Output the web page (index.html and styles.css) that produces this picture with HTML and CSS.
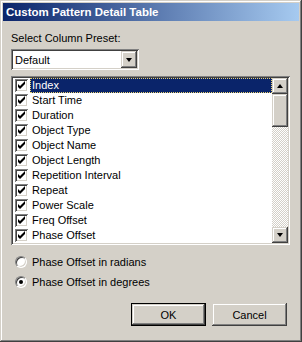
FILE: index.html
```html
<!DOCTYPE html>
<html>
<head>
<meta charset="utf-8">
<link rel="stylesheet" href="styles.css">
</head>
<body>
<div class="window">
  <div class="titlebar">Custom Pattern Detail Table</div>
  <div class="content">
    <div class="label">Select Column Preset:</div>
    <div class="combo">
      <span class="combo-text">Default</span>
      <span class="btn3d combo-btn"><span class="arrow-down"></span></span>
    </div>
    <div class="listbox">
      <div class="items">
        <div class="row sel"><span class="check"><svg width="9" height="9" viewBox="0 0 9 9"><path d="M1 3v3l2 2 5-5v-3l-5 5z" fill="#000"/></svg></span><span class="txt">Index</span></div>
        <div class="row"><span class="check"><svg width="9" height="9" viewBox="0 0 9 9"><path d="M1 3v3l2 2 5-5v-3l-5 5z" fill="#000"/></svg></span><span class="txt">Start Time</span></div>
        <div class="row"><span class="check"><svg width="9" height="9" viewBox="0 0 9 9"><path d="M1 3v3l2 2 5-5v-3l-5 5z" fill="#000"/></svg></span><span class="txt">Duration</span></div>
        <div class="row"><span class="check"><svg width="9" height="9" viewBox="0 0 9 9"><path d="M1 3v3l2 2 5-5v-3l-5 5z" fill="#000"/></svg></span><span class="txt">Object Type</span></div>
        <div class="row"><span class="check"><svg width="9" height="9" viewBox="0 0 9 9"><path d="M1 3v3l2 2 5-5v-3l-5 5z" fill="#000"/></svg></span><span class="txt">Object Name</span></div>
        <div class="row"><span class="check"><svg width="9" height="9" viewBox="0 0 9 9"><path d="M1 3v3l2 2 5-5v-3l-5 5z" fill="#000"/></svg></span><span class="txt">Object Length</span></div>
        <div class="row"><span class="check"><svg width="9" height="9" viewBox="0 0 9 9"><path d="M1 3v3l2 2 5-5v-3l-5 5z" fill="#000"/></svg></span><span class="txt">Repetition Interval</span></div>
        <div class="row"><span class="check"><svg width="9" height="9" viewBox="0 0 9 9"><path d="M1 3v3l2 2 5-5v-3l-5 5z" fill="#000"/></svg></span><span class="txt">Repeat</span></div>
        <div class="row"><span class="check"><svg width="9" height="9" viewBox="0 0 9 9"><path d="M1 3v3l2 2 5-5v-3l-5 5z" fill="#000"/></svg></span><span class="txt">Power Scale</span></div>
        <div class="row"><span class="check"><svg width="9" height="9" viewBox="0 0 9 9"><path d="M1 3v3l2 2 5-5v-3l-5 5z" fill="#000"/></svg></span><span class="txt">Freq Offset</span></div>
        <div class="row"><span class="check"><svg width="9" height="9" viewBox="0 0 9 9"><path d="M1 3v3l2 2 5-5v-3l-5 5z" fill="#000"/></svg></span><span class="txt">Phase Offset</span></div>
      </div>
      <div class="scrollbar">
        <span class="btn3d sb-btn"><span class="arrow-up"></span></span>
        <span class="btn3d thumb"></span>
        <span class="track"></span>
        <span class="btn3d sb-btn"><span class="arrow-down"></span></span>
      </div>
    </div>
    <div class="radios">
      <div class="radio-row"><span class="radio"></span><span>Phase Offset in radians</span></div>
      <div class="radio-row"><span class="radio on"><span class="dot"></span></span><span>Phase Offset in degrees</span></div>
    </div>
    <div class="buttons">
      <div class="default-frame"><div class="btn3d pbtn">OK</div></div>
      <div class="btn3d pbtn cancel">Cancel</div>
    </div>
  </div>
</div>
</body>
</html>
```
FILE: styles.css
```css
* { box-sizing: border-box; }
html, body { margin: 0; padding: 0; background: #d4d0c8; }
body {
  font-family: "Liberation Sans", Arial, sans-serif;
  font-size: 11px;
  color: #000;
}
.window {
  width: 302px;
  height: 342px;
  background: #d4d0c8;
  padding: 3px;
  box-shadow: inset -1px -1px #404040, inset 1px 1px #d4d0c8, inset -2px -2px #808080, inset 2px 2px #fff;
  display: flex;
  flex-direction: column;
}
.titlebar {
  height: 18px;
  line-height: 18px;
  padding-left: 3px;
  color: #fff;
  font-weight: bold;
  font-size: 11.5px;
  background: linear-gradient(to right, #0a246a, #a6caf0);
  white-space: nowrap;
}
.content {
  padding: 11px 9px 0 8px;
  display: flex;
  flex-direction: column;
}
.label { line-height: 13px; height: 13px; }
.combo {
  margin-top: 4px;
  width: 128px;
  height: 21px;
  background: #fff;
  padding: 2px;
  display: flex;
  align-items: center;
  box-shadow: inset 1px 1px #808080, inset -1px -1px #fff, inset 2px 2px #404040, inset -2px -2px #d4d0c8;
}
.combo-text { flex: 1; padding-left: 2px; }
.btn3d {
  background: #d4d0c8;
  box-shadow: inset -1px -1px #404040, inset 1px 1px #d4d0c8, inset -2px -2px #808080, inset 2px 2px #fff;
  display: flex;
  align-items: center;
  justify-content: center;
}
.combo-btn { width: 16px; height: 17px; }
.arrow-down {
  width: 0; height: 0;
  border-left: 3.5px solid transparent;
  border-right: 3.5px solid transparent;
  border-top: 4px solid #000;
}
.arrow-up {
  width: 0; height: 0;
  border-left: 3.5px solid transparent;
  border-right: 3.5px solid transparent;
  border-bottom: 4px solid #000;
}
.listbox {
  margin-top: 6px;
  width: 279px;
  height: 169px;
  background: #fff;
  padding: 2px;
  display: flex;
  box-shadow: inset 1px 1px #808080, inset -1px -1px #fff, inset 2px 2px #404040, inset -2px -2px #d4d0c8;
}
.items { flex: 1; display: flex; flex-direction: column; }
.row {
  height: 15px;
  display: flex;
  align-items: center;
}
.check {
  width: 13px;
  height: 13px;
  margin-left: 2px;
  margin-right: 2px;
  background: #fff;
  display: flex;
  align-items: center;
  justify-content: center;
  box-shadow: inset 1px 1px #808080, inset -1px -1px #fff, inset 2px 2px #404040, inset -2px -2px #d4d0c8;
}
.check svg { display: block; }
.txt {
  flex: 1;
  height: 15px;
  line-height: 13px;
  padding-left: 1px;
  border: 1px solid transparent;
}
.row.sel .txt {
  background: #0a246a;
  color: #fff;
  border: 1px dotted #e8d070;
}
.scrollbar {
  width: 16px;
  display: flex;
  flex-direction: column;
}
.sb-btn { width: 16px; height: 16px; }
.thumb { width: 16px; height: 33px; }
.track {
  flex: 1;
  background: repeating-conic-gradient(#fff 0 25%, #d4d0c8 0 50%) 0 0 / 2px 2px;
}
.radios {
  margin-top: 9px;
  display: flex;
  flex-direction: column;
  gap: 4px;
}
.radio-row {
  height: 16px;
  display: flex;
  align-items: center;
  gap: 5px;
  padding-left: 4px;
}
.radio {
  width: 12px;
  height: 12px;
  border-radius: 50%;
  background: #fff;
  border: 1px solid;
  border-color: #808080 #fff #fff #808080;
  box-shadow: inset 1px 1px #404040, inset -1px -1px #d4d0c8;
  display: flex;
  align-items: center;
  justify-content: center;
}
.dot { width: 4px; height: 4px; border-radius: 50%; background: #000; }
.buttons {
  margin-top: 13px;
  display: flex;
  justify-content: flex-end;
  gap: 6px;
  padding-right: 3px;
}
.default-frame {
  border: 1px solid #000;
  width: 75px;
  height: 23px;
}
.pbtn {
  width: 73px;
  height: 21px;
}
.cancel { width: 75px; height: 23px; }
```
